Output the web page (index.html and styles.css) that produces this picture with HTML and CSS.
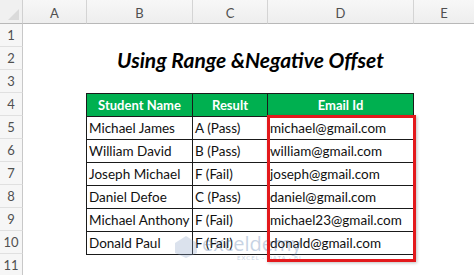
FILE: index.html
```html
<!DOCTYPE html>
<html>
<head>
<meta charset="utf-8">
<link rel="stylesheet" href="styles.css">
</head>
<body>
<div class="sheet">
  <div class="corner"><span class="tri"></span></div>
  <div class="colhead">A</div>
  <div class="colhead">B</div>
  <div class="colhead">C</div>
  <div class="colhead">D</div>
  <div class="colhead last">E</div>

  <div class="rowhead r1">1</div>
  <div class="rowhead r2">2</div>
  <div class="rowhead r3">3</div>
  <div class="rowhead r4">4</div>
  <div class="rowhead r5">5</div>
  <div class="rowhead r6">6</div>
  <div class="rowhead r7">7</div>
  <div class="rowhead r8">8</div>
  <div class="rowhead r9">9</div>
  <div class="rowhead r10">10</div>
  <div class="rowhead r11">11</div>

  <div class="title">Using Range &amp;Negative Offset</div>

  <table class="data">
    <tr class="hd"><th>Student Name</th><th>Result</th><th>Email Id</th></tr>
    <tr><td>Michael James</td><td>A (Pass)</td><td>michael@gmail.com</td></tr>
    <tr><td>William David</td><td>B (Pass)</td><td>william@gmail.com</td></tr>
    <tr><td>Joseph Michael</td><td>F (Fail)</td><td>joseph@gmail.com</td></tr>
    <tr><td>Daniel Defoe</td><td>C (Pass)</td><td>daniel@gmail.com</td></tr>
    <tr><td>Michael Anthony</td><td>F (Fail)</td><td>michael23@gmail.com</td></tr>
    <tr><td>Donald Paul</td><td>F (Fail)</td><td>donald@gmail.com</td></tr>
  </table>

  <div class="watermark">
    <svg class="wm-logo" width="24" height="24" viewBox="0 0 24 24"><path d="M12 1 L23 8 L23 18 L12 23 L1 18 L1 8 Z" fill="#8aa3c7"/></svg>
    <div class="wm-text"><span class="wm-name">exceldemy</span><span class="wm-sub">EXCEL · DATA · BI</span></div>
  </div>
  <div class="highlight"></div>
</div>
</body>
</html>
```
FILE: styles.css
```css
html, body {
  margin: 0;
  padding: 0;
  background: #ffffff;
}
body {
  width: 474px;
  height: 275px;
  overflow: hidden;
  font-family: "Lato", "Liberation Sans", sans-serif;
}
.sheet {
  position: relative;
  display: grid;
  grid-template-columns: 23px 64px 106px 75px 146px 60px;
  grid-template-rows: 24px repeat(11, 23px);
  width: 474px;
  height: 275px;
  background: #fff;
}
.corner {
  grid-column: 1;
  grid-row: 1;
  background: #f0f0f0;
  border-right: 1px solid #d0d0d0;
  border-bottom: 1px solid #b8b8b8;
  box-sizing: border-box;
  position: relative;
}
.tri {
  position: absolute;
  right: 3px;
  bottom: 3px;
  width: 0;
  height: 0;
  border-left: 11px solid transparent;
  border-bottom: 11px solid #dadada;
}
.colhead {
  grid-row: 1;
  background: linear-gradient(#f7f7f7, #eeeeee);
  border-bottom: 1px solid #b8b8b8;
  border-right: 1px solid #d4d4d4;
  box-sizing: border-box;
  color: #505050;
  font-size: 13px;
  display: flex;
  align-items: center;
  justify-content: center;
  padding-top: 2px;
}
.colhead.last { border-right: none; }
.rowhead {
  grid-column: 1;
  background: #f6f6f6;
  border-right: 1px solid #c8c8c8;
  border-bottom: 1px solid #e0e0e0;
  box-sizing: border-box;
  color: #505050;
  font-size: 13px;
  display: flex;
  align-items: center;
  justify-content: center;
}
.r1 { grid-row: 2; }
.r2 { grid-row: 3; }
.r3 { grid-row: 4; }
.r4 { grid-row: 5; }
.r5 { grid-row: 6; }
.r6 { grid-row: 7; }
.r7 { grid-row: 8; }
.r8 { grid-row: 9; }
.r9 { grid-row: 10; }
.r10 { grid-row: 11; }
.r11 { grid-row: 12; }

.title {
  grid-column: 3 / 6;
  grid-row: 3;
  display: flex;
  align-items: center;
  justify-content: center;
  font-weight: 700;
  font-style: italic;
  font-size: 21px;
  color: #000;
  margin-top: 1px;
}

.data {
  grid-column: 3 / 6;
  grid-row: 5 / 12;
  border-collapse: collapse;
  width: 328px;
  height: 162px;
  margin-left: -1px;
  font-size: 13.5px;
  color: #111;
  table-layout: fixed;
  position: relative;
  z-index: 1;
}
.data th, .data td {
  border: 1px solid #1a1a1a;
  padding: 0 0 0 2px;
  height: 22px;
  white-space: nowrap;
  overflow: hidden;
  text-align: left;
}
.data th:nth-child(1) { width: 105px; }
.data th:nth-child(2) { width: 74px; }
.data .hd th {
  background: #00b050;
  color: #ffffff;
  font-weight: 700;
  font-size: 13px;
  text-align: center;
  padding: 0;
}

.watermark {
  position: absolute;
  left: 174px;
  top: 234px;
  display: flex;
  align-items: flex-start;
  gap: 4px;
  opacity: 0.3;
  z-index: 2;
  pointer-events: none;
}
.wm-logo { margin-top: 1px; }
.wm-text {
  display: flex;
  flex-direction: column;
  align-items: flex-end;
}
.wm-name {
  font-family: "Open Sans", sans-serif;
  font-size: 20px;
  line-height: 20px;
  color: #4a6fa5;
}
.wm-sub {
  font-size: 6px;
  line-height: 7px;
  letter-spacing: 1px;
  color: #4a6fa5;
}

.highlight {
  position: absolute;
  left: 267px;
  top: 115px;
  width: 149px;
  height: 147px;
  box-sizing: border-box;
  border: 3px solid #e3191c;
  box-shadow: 1px 1px 3px rgba(0,0,0,0.25);
  z-index: 3;
}
```
